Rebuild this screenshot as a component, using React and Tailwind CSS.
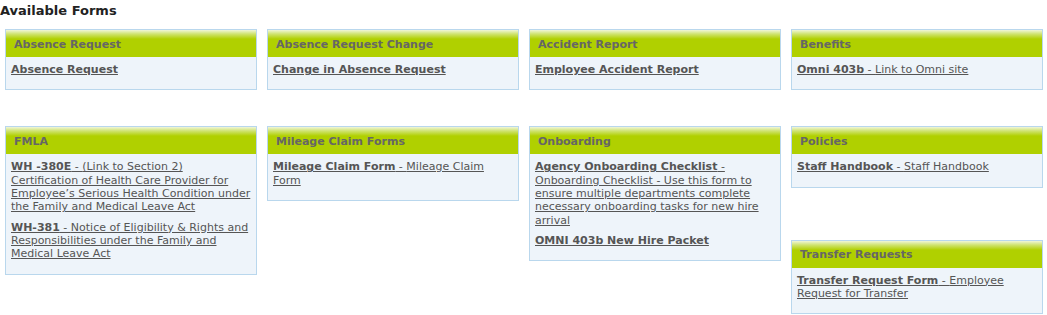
const forms = {
  absence: {
    title: 'Absence Request',
    items: [{ name: 'Absence Request' }],
  },
  absenceChange: {
    title: 'Absence Request Change',
    items: [{ name: 'Change in Absence Request' }],
  },
  accident: {
    title: 'Accident Report',
    items: [{ name: 'Employee Accident Report' }],
  },
  benefits: {
    title: 'Benefits',
    items: [{ name: 'Omni 403b', desc: 'Link to Omni site' }],
  },
  fmla: {
    title: 'FMLA',
    items: [
      {
        name: 'WH -380E',
        desc: '(Link to Section 2) Certification of Health Care Provider for Employee\u2019s Serious Health Condition under the Family and Medical Leave Act',
      },
      {
        name: 'WH-381',
        desc: 'Notice of Eligibility & Rights and Responsibilities under the Family and Medical Leave Act',
      },
    ],
  },
  mileage: {
    title: 'Mileage Claim Forms',
    items: [{ name: 'Mileage Claim Form', desc: 'Mileage Claim Form' }],
  },
  onboarding: {
    title: 'Onboarding',
    items: [
      {
        name: 'Agency Onboarding Checklist',
        desc: 'Onboarding Checklist - Use this form to ensure multiple departments complete necessary onboarding tasks for new hire arrival',
      },
      { name: 'OMNI 403b New Hire Packet' },
    ],
  },
  policies: {
    title: 'Policies',
    items: [{ name: 'Staff Handbook', desc: 'Staff Handbook' }],
  },
  transfer: {
    title: 'Transfer Requests',
    items: [{ name: 'Transfer Request Form', desc: 'Employee Request for Transfer' }],
  },
};

function FormBox({ group, className = '' }) {
  return (
    <div className={`border border-[#b9d7ed] bg-[#eef4fa] ${className}`}>
      <div className="h-[27px] flex items-center pl-2 pt-[2px] font-bold text-[#666666] bg-[linear-gradient(to_bottom,#f0f6d8_0px,#cfe370_4px,#b0d000_9px,#b0d000_100%)]">
        {group.title}
      </div>
      <div className="px-[5px] pt-[6px] pb-[6px]">
        {group.items.map((item) => (
          <div key={item.name} className="mb-[7px]">
            <a href="#" className="underline text-[#555555]">
              <span className="font-bold">{item.name}</span>
              {item.desc && <span> - {item.desc}</span>}
            </a>
          </div>
        ))}
      </div>
    </div>
  );
}

export default function App() {
  return (
    <div className="w-[1047px] h-[315px] bg-white overflow-hidden font-['DejaVu_Sans',Verdana,sans-serif] text-[11px] leading-[13.33px]">
      <h2 className="pt-[3px] text-[13px] leading-[16px] font-bold text-[#222222]">Available Forms</h2>

      <div className="pl-[5px] pt-[10px] grid grid-cols-[252px_252px_252px_252px] gap-x-[10px] gap-y-[36px] items-start">
        <FormBox group={forms.absence} />
        <FormBox group={forms.absenceChange} />
        <FormBox group={forms.accident} />
        <FormBox group={forms.benefits} />

        <FormBox group={forms.fmla} />
        <FormBox group={forms.mileage} />
        <FormBox group={forms.onboarding} />
        <div className="flex flex-col gap-[52px]">
          <FormBox group={forms.policies} />
          <FormBox group={forms.transfer} />
        </div>
      </div>
    </div>
  );
}
